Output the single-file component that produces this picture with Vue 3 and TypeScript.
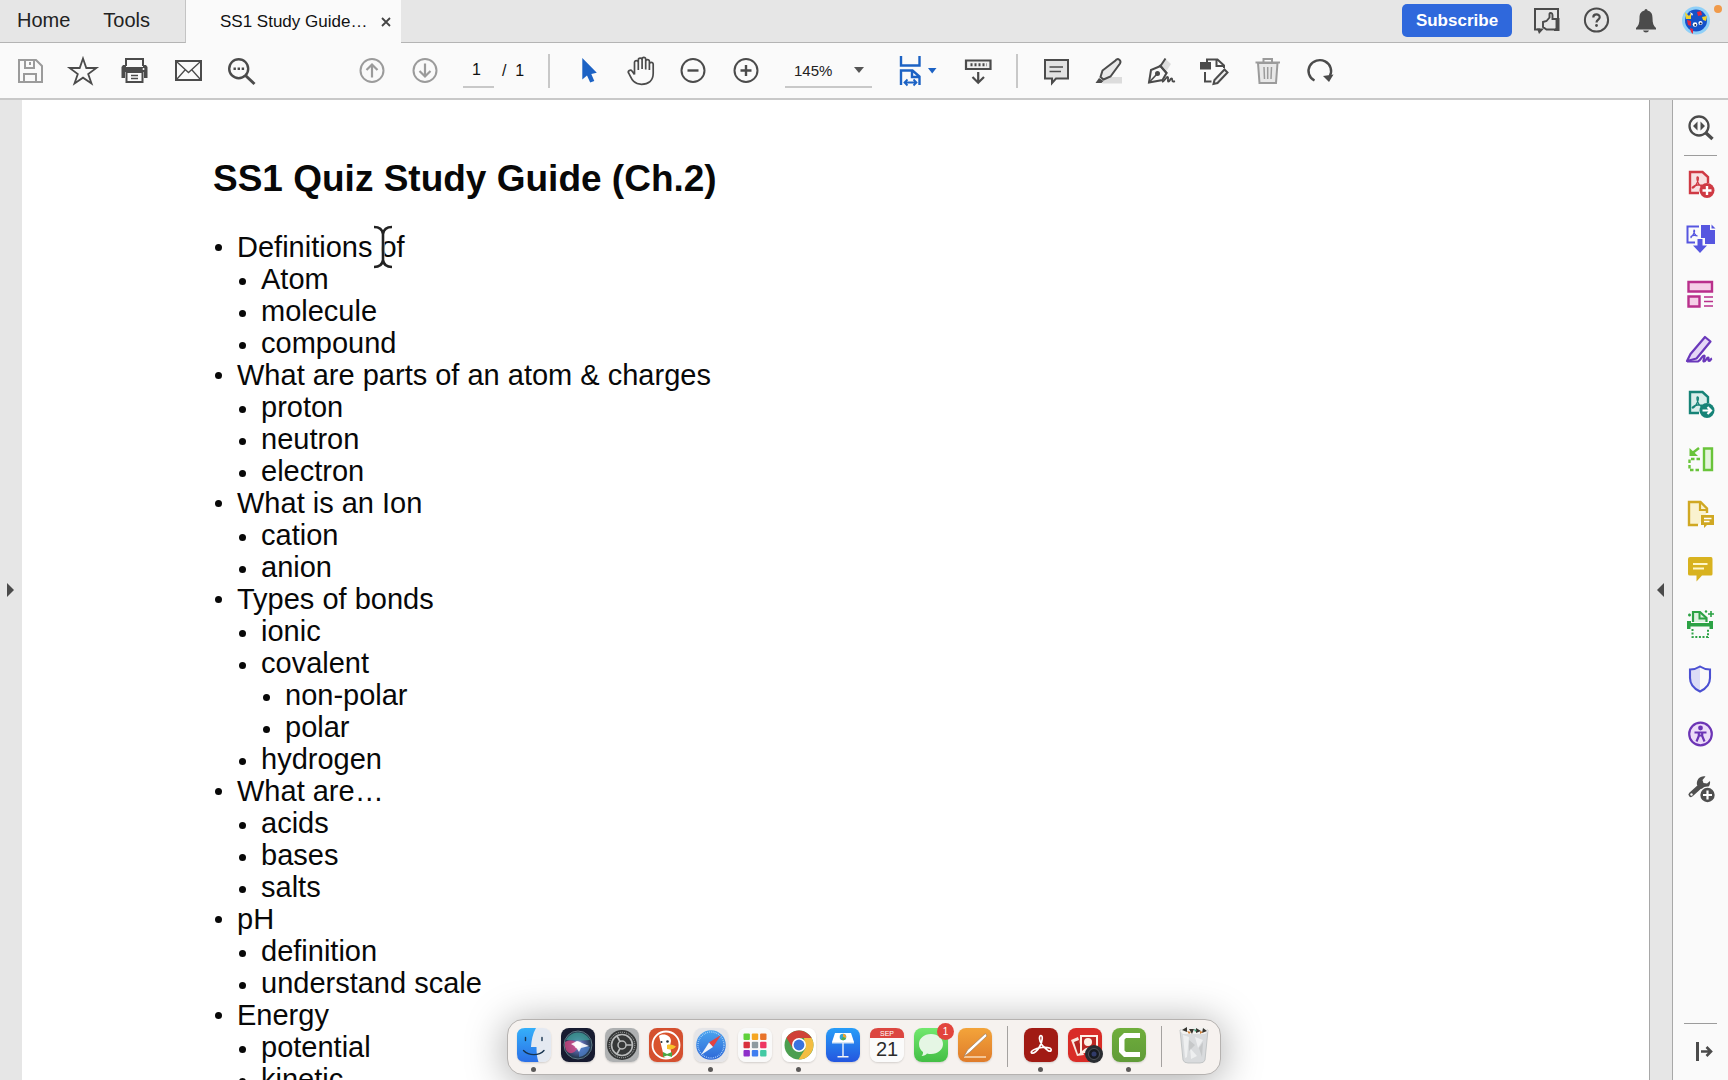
<script setup lang="ts">
import { ref } from 'vue'

interface Tool { name: string; art: string; tone?: string }
interface Entry { text: string; items?: Entry[] }
interface App { name: string; art: string; running?: boolean; badge?: string }

const page = ref('1')
const zoom = ref('145%')

const fileTools: Tool[] = [
  { name: 'Save', tone: 'muted', art: '<path d="M5 6H22L28 12V28H5Z"/><path d="M11 6V14H20V6M16 8V11M10 28V20H22V28"/>' },
  { name: 'Star', art: '<path stroke-width="1.8" d="M16 4.5l3.3 9.5H29.4l-8.2 6.1 3.3 9.4-8.5-5.8-8.5 5.8 3.3-9.4-8.2-6.1h10.1z"/>' },
  { name: 'Print', art: '<path d="M6 12V5H23V12"/><path fill="currentColor" stroke="none" d="M3 11H6V13H23V11H26L27.500 13V24H24V18H5V24H1.500V13Z"/><path fill="#fafafa" d="M6.500 18H22.500V28H6.500Z"/><path stroke-width="1.500" d="M11 21.500H18M11 24.500H18"/><circle cx="23.500" cy="15" r="1" fill="#fff" stroke="none"/>' },
  { name: 'Email', art: '<path d="M3 7H28V26H3Z"/><path stroke-width="1.300" d="M4 8L15.500 18.500 27 8M4 25L12 16M27 25L19 16"/>' },
  { name: 'Find', art: '<circle cx="12.700" cy="14.700" r="9.500" stroke-width="2.400"/><path stroke-width="3" d="M19.500 21.500L28.500 30"/><path fill="currentColor" stroke="none" d="M7.500 13.500h2.400v2.400H7.500zM11.600 13.500H14v2.400h-2.400zM15.700 13.500h2.400v2.400h-2.400z"/>' },
]
const pageTools: Tool[] = [
  { name: 'Previous page', tone: 'muted', art: '<circle cx="16" cy="16.500" r="11.500"/><path stroke-width="2.200" d="M16 23.500V11M10.500 16L16 10.500 21.500 16"/>' },
  { name: 'Next page', tone: 'muted', art: '<circle cx="16" cy="16.500" r="11.500"/><path stroke-width="2.200" d="M16 9.500V22M10.500 17L16 22.500 21.500 17"/>' },
]
const viewTools: Tool[] = [
  { name: 'Select', tone: 'blue', art: '<path fill="currentColor" stroke="none" d="M11.300 4V25.500L16 21.500 19.200 28.500 23.300 27 20.300 20 25.800 18.700Z"/>' },
  { name: 'Pan', art: '<path stroke-width="1.700" d="M10.500 20.500L8 17a2 2 0 0 0-3.400 2.100C7 22.500 8 30.300 17.500 30.300c7 0 11.700-3.500 11.700-11V10.300a1.900 1.900 0 0 0-3.800 0V16M10.500 20.500V8.500a1.900 1.900 0 0 1 3.800 0V16M14.300 16V6a1.900 1.900 0 0 1 3.800 0V15M18.100 15V5.200a1.800 1.800 0 0 1 3.600 0V15.500M21.700 15V7.500a1.800 1.800 0 0 1 3.700 0V16"/>' },
  { name: 'Zoom out', art: '<circle cx="16" cy="16.500" r="11.500"/><path d="M10.500 16.500H21.500" stroke-width="2.400"/>' },
  { name: 'Zoom in', art: '<circle cx="16" cy="16.500" r="11.500"/><path d="M10.500 16.500H21.500M16 11V22" stroke-width="2.400"/>' },
]
const markTools: Tool[] = [
  { name: 'Comment', art: '<path fill="#e2e2e2" d="M5 6H28V24.500H16L12 29V24.500H5Z"/><path stroke-width="1.500" d="M9.500 13H23M9.500 17.500H21"/>' },
  { name: 'Highlight', art: '<path fill="#dcdcdc" stroke="none" d="M13 23H29V29.500H9Z"/><path fill="#e8e8e8" d="M22.500 6.500c1-1.500 2.500-1.800 3.800-.8s1.500 2.300.7 3.800L17.500 22.500 10.500 25.500 7.500 23 9.500 16.500Z"/><path fill="currentColor" stroke="none" d="M6 24L10.500 27 8.500 29H2.500Z"/>' },
  { name: 'Sign', art: '<path stroke="none" fill="#dedede" d="M19.500 5L25 10 20.500 17 15 12Z"/><path d="M3 28.500L5 16 14.500 12 20.500 19 16.500 26Z"/><path stroke-width="1.600" d="M3 28.500L11 20"/><path d="M13.500 11L21 19.500M14.500 12L19.500 4.500"/><circle cx="11.500" cy="19.500" r="1.500" fill="currentColor"/><path stroke-width="1.800" d="M16 28c3-1 4-5 5.500-5s-.5 4.500 1 4.500 1.500-3 3-3 0 3 1.500 3 1 0 2-.3"/>' },
  { name: 'Edit PDF', art: '<path fill="currentColor" stroke="none" d="M1 8H12V15.500H1Z"/><path d="M8 8V5.500H18.500L25 11.500V14M17.500 6V12H24M6 18V27.500H12.500"/><path fill="#eee" d="M25.500 15.500L28.500 18.500 18.500 29 14.500 30 15.500 26Z"/>' },
  { name: 'Delete', tone: 'muted', art: '<path fill="#e8e8e8" d="M6 9H25.500L24 29H7.500Z"/><path d="M3.500 8.500H28M11.500 8V5H20V8" /><path stroke-width="1.500" d="M12 13L12.500 25M15.700 13V25M19.500 13L19 25"/>' },
  { name: 'Rotate', art: '<path stroke-width="2.400" d="M9.500 26.500A11.300 10.800 0 1 1 24.800 22"/><path fill="currentColor" stroke="none" d="M18 22L28.500 20.500 24 28Z"/>' },
]

const acrobatMark = '<path stroke-width="1.300" d="M13.500 9C15 9 14.500 12 13 15S9.500 20.500 8.500 20 10 17.500 13.500 17 19.500 17.300 19 18.500 16 18 14.500 15.500 12.500 9 13.500 9Z"/>'
const sideTools: Tool[] = [
  { name: 'Create PDF', tone: '#cf3a44', art: `<path fill="#f8e1e2" stroke-width="2.400" d="M24 15V9L18.500 4H6V25H15"/>${acrobatMark}<circle cx="23" cy="22.500" r="7.500" fill="currentColor" stroke="none"/><path stroke="#fff" stroke-width="2.400" d="M18.500 22.500H27.500M23 18V27"/>` },
  { name: 'Export PDF', tone: '#5656e0', art: '<path fill="currentColor" stroke="none" d="M17 2H26V7H31V21H21V15H17Z"/><path fill="currentColor" stroke="none" d="M27.500 1.500L31.500 5.500H27.500Z"/><path d="M15 3.500H3.500V19.500H11"/><path stroke-width="1.200" d="M10 7c1.500 0 0 4-3 7.500-1-1.500 3-3 6.500-1.500C11 13 9 8.500 10 7Z"/><path fill="currentColor" stroke="none" d="M13.500 16H18.500V22.500H23L16 30 9 22.500H13.500Z"/>' },
  { name: 'Organize pages', tone: '#b9308c', art: '<path fill="#f5cfe7" stroke-width="2.400" d="M4.500 4H28V13.500H4.500ZM4.500 18.500H15.500V28.500H4.500Z"/><path stroke-width="1.700" d="M20 19H29M20 23.500H29M20 28H29"/>' },
  { name: 'Fill and sign', tone: '#6a38bb', art: '<path fill="#e5d7f6" stroke-width="2.200" stroke-linejoin="round" d="M21 4L26.500 8.500 12.500 25.500 3 28 6.500 21Z"/><path stroke-width="2.200" d="M3 28.500H14c3-1 4-6 6-6s-2 6 0 6 2.500-4 4-4-.5 3.500 1 3.500 1.500-2 3-2.500"/>' },
  { name: 'Send for review', tone: '#168377', art: `<path fill="#d9eeeb" stroke-width="2.400" d="M24 15V9L18.500 4H6V25H15"/>${acrobatMark}<circle cx="23" cy="22.500" r="7.500" fill="currentColor" stroke="none"/><path stroke="#fff" stroke-width="2.200" d="M18.500 22.500H27M23.500 19L27 22.500 23.500 26"/>` },
  { name: 'Compare files', tone: '#69c43a', art: '<path fill="#e5f4dc" stroke-width="2.400" d="M20 5.500H28V27H20Z"/><path stroke-width="2.400" stroke-dasharray="3.500 2" d="M16 16H5.500V27H17"/><path stroke-width="2.400" d="M15 5L8.500 10"/><path fill="currentColor" stroke="none" d="M5.500 5V13H14Z"/>' },
  { name: 'Combine files', tone: '#d0a823', art: '<path fill="#faf2cf" stroke-width="2.400" d="M14 27H5V4H16.500L23 10.500V15"/><path stroke-width="2.200" d="M16 5V12H23"/><path fill="currentColor" stroke="none" d="M17 17H30V27H23L20 30V27H17Z"/><path stroke="#fff" stroke-width="1.300" d="M20 20.500H27.500M20 23.500H25.500"/>' },
  { name: 'Comment', tone: '#d8b21f', art: '<path fill="currentColor" stroke="none" d="M6 4H27Q28.500 4 28.500 6V21Q28.500 22.500 27 22.500H18L12.500 28.500V22.500H6Q4 22.500 4 21V6Q4 4 6 4Z"/><path stroke="#fff7c8" stroke-width="1.800" d="M9 11H23.500M9 15.500H20"/>' },
  { name: 'Scan', tone: '#2ca245', art: '<path fill="#dcf1df" stroke-width="2.200" d="M9 14V4H16L22.500 10V14"/><path stroke-width="2" d="M15.500 4V10.500H22"/><path fill="currentColor" stroke="none" d="M3 13H7V15H25V13H29V21H25.500V18.500H6.500V21H3Z"/><path stroke-width="2" stroke-dasharray="2 1.600" d="M8.500 21V29H24V21"/><path stroke-width="1.600" d="M27 3V9M24 6H30M5.500 5.500V8.500M4 7H7"/><circle cx="22" cy="3.500" r="1.200" fill="currentColor" stroke="none"/>' },
  { name: 'Protect', tone: '#4b50d2', art: '<path fill="#dcdcf6" stroke="none" d="M16 4V28C9 24 6.500 20 6.500 15V6.500C10 6.500 13 5.500 16 4Z"/><path stroke-width="2.100" d="M16 3.500C19 5.500 22 6.500 26 6.500V15C26 21 22.500 25.500 16 28.500 9.500 25.500 6 21 6 15V6.500C10 6.500 13 5.500 16 3.500Z"/>' },
  { name: 'Accessibility', tone: '#6c34b5', art: '<circle cx="16.500" cy="16" r="11.300" fill="#ecdcf8" stroke-width="2.200"/><circle cx="16.500" cy="10" r="2.400" fill="currentColor" stroke="none"/><path stroke-width="2.200" d="M10.500 14.500H22.500M14.800 14V18L12.500 23.500M18.200 14V18L20.500 23.500M15 17.500H18"/>' },
  { name: 'More tools', tone: '#4f4f4f', art: '<path stroke-width="5" stroke-linecap="round" d="M7 21.500L17 12.500"/><path fill="currentColor" stroke="none" d="M13 12C12 7 16 2.500 21.500 3.500L18.500 7 19.500 10 23 10.500 26 8C27 13 22 18 16.500 15.500Z"/><circle cx="7.500" cy="21.500" r="1.200" fill="#fafafa" stroke="none"/><circle cx="23.500" cy="22" r="8.500" fill="#fafafa" stroke="none"/><circle cx="23.500" cy="22" r="7.200" fill="currentColor" stroke="none"/><path stroke="#fff" stroke-width="2.200" d="M19 22H28M23.500 17.500V26.500"/>' },
]

const accountTools: Tool[] = [
  { name: 'Feedback', art: '<path d="M10 25.500H5V5H28V14"/><path fill="currentColor" stroke="none" d="M7 24.500H14L9 30ZM24 14H29.500V27H24Z"/><path fill="#e6e6e6" stroke-width="1.900" d="M13 18L16.500 17 19.500 13.500V10C19.500 8.500 22.500 8.500 22.500 11V15H26.500V24Q26 25.500 24 25.500H16.500L13 23Z"/>' },
  { name: 'Help', art: '<circle cx="16.500" cy="16" r="11.600"/><path stroke-width="2.200" d="M13.300 13.500C13.300 9.500 19.700 9.500 19.700 13.200 19.700 15.500 16.500 15.700 16.500 18.500"/><circle cx="16.500" cy="21.500" r="1.400" fill="currentColor" stroke="none"/>' },
  { name: 'Notifications', art: '<path fill="currentColor" stroke="none" d="M14.500 6.500Q14.500 5 16 5T17.500 6.500C21.500 7.500 22.500 10.500 22.500 14 22.500 19 23.500 22 26 24V25.500H6V24C8.500 22 9.500 19 9.500 14 9.500 10.500 10.500 7.500 14.500 6.500ZM13 26.500H19Q18.500 28.500 16 28.500T13 26.500Z"/>' },
  { name: 'Account', art: '<g stroke="none"><circle cx="16" cy="16.500" r="14" fill="#8fd0f8"/><circle cx="16" cy="16.500" r="11" fill="#1551c8"/><path fill="#f0d22b" d="M5 8L9 12 11 9 11 15 6 15ZM22 13l5-1-1 5-3-1z"/><path fill="#e2263f" d="M7 16L11 17 11 22 8 21ZM17 8L21 7 22 11 18 12ZM10 24l3 1 0 5-2-2z"/><circle cx="15" cy="20.500" r="2.300" fill="#fff"/><circle cx="20.500" cy="19" r="2.100" fill="#fff"/><circle cx="15.300" cy="21" r="1" fill="#124"/><circle cx="20.700" cy="19.500" r="1" fill="#124"/><path fill="#fff" d="M10 8l3 2-1 2z"/></g>' },
]

const guide: Entry[] = [
  { text: 'Definitions of', items: [{ text: 'Atom' }, { text: 'molecule' }, { text: 'compound' }] },
  { text: 'What are parts of an atom & charges', items: [{ text: 'proton' }, { text: 'neutron' }, { text: 'electron' }] },
  { text: 'What is an Ion', items: [{ text: 'cation' }, { text: 'anion' }] },
  { text: 'Types of bonds', items: [{ text: 'ionic' }, { text: 'covalent', items: [{ text: 'non-polar' }, { text: 'polar' }] }, { text: 'hydrogen' }] },
  { text: 'What are…', items: [{ text: 'acids' }, { text: 'bases' }, { text: 'salts' }] },
  { text: 'pH', items: [{ text: 'definition' }, { text: 'understand scale' }] },
  { text: 'Energy', items: [{ text: 'potential' }, { text: 'kinetic' }] },
]

const tile = (fill: string) => `<rect width="34" height="34" rx="8" fill="${fill}"/>`
const gridColors = ['#5fd13c', '#f5a623', '#e8742a', '#d8303c', '#8d9aa0', '#ee3562', '#8d2fc9', '#3f7df0', '#42c9a4']
const gridArt = gridColors
  .map((c, i) => `<rect x="${5.5 + (i % 3) * 8.300}" y="${5.500 + Math.floor(i / 3) * 8.300}" width="6.400" height="6.400" rx="1" fill="${c}"/>`)
  .join('')

const mainApps: App[] = [
  { name: 'Finder', running: true, art: tile('#e4e9f1') + '<path fill="url(#finder)" d="M8 0H19C15.500 6 14.500 12 14 19H19.500C19.500 25 20 30 21.500 34H8Q0 34 0 26V8Q0 0 8 0Z"/><path fill="none" stroke="#17344f" stroke-width="1.400" stroke-linecap="round" d="M8.500 9.500V12.500M25 9.500V12.500M6.500 22.500C12 28 22 28 27 22.500"/>' },
  { name: 'Siri', art: tile('#171b30') + '<circle cx="17" cy="17" r="14" fill="url(#siri)" stroke="#6d8a94" stroke-width=".8"/><path fill="#3fa79b" opacity=".7" d="M5 12C10 2 24 2 29 12 22 13 13 12 5 12Z"/><path fill="#d8447f" opacity=".75" d="M4 14C10 11 15 13 18 17 15 25 9 28 5 22Q3 18 4 14Z"/><path fill="#4d83cf" opacity=".7" d="M18 17L29 19Q26 28 18 29Z"/><circle cx="17" cy="17" r="3.500" fill="#fff" opacity=".8"/><path fill="#fff" opacity=".9" d="M10 16L16 13 21 15 28 18 20 20 18 24 15 19Z"/>' },
  { name: 'System Preferences', art: tile('#aeb0b1') + '<circle cx="17" cy="17" r="15" fill="#363838"/><g fill="none" stroke="#b9bbbb"><circle cx="17" cy="17" r="12.800" stroke-width="1" stroke-dasharray="1 1"/><circle cx="17" cy="17" r="10.500" stroke-width="1.600"/><circle cx="17" cy="17" r="4" stroke-width="1.500"/><path stroke-width="1.600" d="M21 17H27M15 13.500L12 8M15 20.500L12 26"/></g>' },
  { name: 'DuckDuckGo', art: tile('#d4502f') + '<circle cx="17" cy="17" r="13.500" fill="#d9532d" stroke="#fff" stroke-width="1.800"/><path fill="#fff" d="M10 8C14 5 22 7 22 13L21 18 23 29Q18 31 15 29Z"/><circle cx="18.500" cy="13.500" r="1.300" fill="#26323a"/><circle cx="12.500" cy="14" r="1" fill="#26323a"/><path fill="#f8c32c" d="M18 17C21 16 24 17 27 18.500 25 21 22 22 18 21Z"/><path fill="#4ca544" d="M14 24L18 26 23 24V29L18 27.500 14 29Z"/>' },
  { name: 'Safari', running: true, art: tile('#e5e5e8') + '<circle cx="17" cy="17" r="14.800" fill="url(#safari)"/><circle cx="17" cy="17" r="13" fill="none" stroke="#b9dcff" stroke-width="1.400" stroke-dasharray=".7 1.200"/><path fill="#e34240" d="M27 7L15 14.500 19 19Z"/><path fill="#f1f4fa" d="M7 27L15 14.500 19 19Z"/>' },
  { name: 'Launchpad', art: tile('#f9f9f9') + gridArt },
  { name: 'Chrome', running: true, art: tile('#fff') + '<circle cx="17" cy="17" r="14.500" fill="#4c9f50"/><path fill="#cf4236" d="M4.500 9.700A14.500 14.500 0 0 1 29.600 10H17L11 20.500Z"/><path fill="#f3bd42" d="M29.600 10A14.500 14.500 0 0 1 16.500 31.500L23.500 20.500 22 10Z"/><circle cx="17" cy="17" r="7" fill="#fff"/><circle cx="17" cy="17" r="5.400" fill="#3973df"/>' },
  { name: 'Keynote', art: tile('url(#keynote)') + '<path fill="#fff" d="M9 5H25L28 14H6Z"/><path fill="#d7e6f4" d="M6 14H28V15.500H6Z"/><path stroke="#e7eef8" stroke-width="1.500" d="M17 15V29"/><path fill="#f3f3f3" d="M11.500 28H22.500V29.500H11.500Z"/><circle cx="17" cy="9" r="3.300" fill="#37a5d5"/><path fill="#f1a52d" d="M17 9V5.700A3.300 3.300 0 0 1 20 10Z"/><path fill="#58ae49" d="M17 9L20 10.500A3.300 3.300 0 0 1 15 11.500Z"/>' },
  { name: 'Calendar', art: tile('#fbfbfb') + '<path fill="#dc4640" d="M0 10V8Q0 0 8 0H26Q34 0 34 8V10Z"/><text x="17" y="8" text-anchor="middle" font-size="7" fill="#fff">SEP</text><text x="17" y="28" text-anchor="middle" font-size="20" fill="#2b2b2b">21</text>' },
  { name: 'Messages', badge: '1', art: tile('url(#messages)') + '<path fill="#e5f6e4" d="M17 6C24 6 29 10.500 29 16S24 26 17 26Q15 26 13 25.500C12 27 10 28 7.500 28 9 26.500 9 25.500 9 24 6.500 22 5 19.500 5 16 5 10.500 10 6 17 6Z"/>' },
  { name: 'Pages', art: tile('url(#pages)') + '<path stroke="#fff1dc" stroke-width="1.200" d="M6 29H28"/><path fill="#fff" stroke="#9b8066" stroke-width=".7" d="M27.500 5.500L29 8 12 24 6 28.500 9.500 22Z"/>' },
]
const openApps: App[] = [
  { name: 'Acrobat', running: true, art: tile('#a11b14') + '<path fill="none" stroke="#fff" stroke-width="1.700" d="M17 7.500C19 7.500 18.500 13 16 18S9.500 26 7.500 25C6 23.500 11 20 18 19.500S28 20.500 27 22.500 22.500 22 18.500 17.500 15 7.500 17 7.500Z"/>' },
  { name: 'Photo Booth', art: tile('#d92c27') + '<path fill="#f8e9df" d="M3 12L10 9 16 27 9 28Z"/><path fill="#b32622" d="M6 14L11 12 14 24 10 26Z"/><path fill="#fff1e6" d="M12 7H30V25H12Z"/><path fill="#bd2824" d="M14 9H28V23H14Z"/><circle cx="20" cy="14" r="4" fill="#fff0e5"/><path fill="#fff0e5" d="M14 23Q20 16 27 23Z"/><circle cx="26" cy="26" r="9" fill="#292c31"/><circle cx="26" cy="26" r="5.500" fill="#171a20" stroke="#50545a"/><circle cx="26" cy="26" r="2.500" fill="#313b69"/>' },
  { name: 'Camtasia', running: true, art: tile('url(#camtasia)') + '<path fill="#fff" d="M12 5H28V10H14L12.500 11.500V22.500L14 24H28V29H12L7 24V10Z"/>' },
]
</script>

<template>
  <div class="window">
    <header class="tabs">
      <nav class="links">
        <a href="#home">Home</a>
        <a href="#tools">Tools</a>
      </nav>
      <div class="tab">
        <span>SS1 Study Guide…</span>
        <button class="close" aria-label="Close tab">
          <svg width="10" height="10" viewBox="0 0 10 10"><path d="M1 1L9 9M9 1L1 9" stroke="#444" stroke-width="1.8" /></svg>
        </button>
      </div>
      <div class="account">
        <button class="subscribe">Subscribe</button>
        <button v-for="t in accountTools" :key="t.name" class="tool" :aria-label="t.name">
          <svg viewBox="0 0 32 34" v-html="t.art" />
        </button>
        <i class="alert"></i>
      </div>
    </header>

    <div class="toolbar">
      <div class="group file">
        <button v-for="t in fileTools" :key="t.name" class="tool" :class="t.tone" :aria-label="t.name">
          <svg viewBox="0 0 32 34" v-html="t.art" />
        </button>
      </div>
      <div class="group paging">
        <button v-for="t in pageTools" :key="t.name" class="tool" :class="t.tone" :aria-label="t.name">
          <svg viewBox="0 0 32 34" v-html="t.art" />
        </button>
      </div>
      <label class="count"><input v-model="page" aria-label="Page number" /><span>/ &nbsp;1</span></label>
      <i class="rule"></i>
      <div class="group view">
        <button v-for="t in viewTools" :key="t.name" class="tool" :class="t.tone" :aria-label="t.name">
          <svg viewBox="0 0 32 34" v-html="t.art" />
        </button>
      </div>
      <div class="zoom">
        <select v-model="zoom" aria-label="Zoom level">
          <option>100%</option>
          <option>145%</option>
          <option>200%</option>
        </select>
        <svg width="10" height="6" viewBox="0 0 10 6"><path d="M0 0H10L5 6Z" fill="#555" /></svg>
      </div>
      <button class="tool wide blue" aria-label="Fit width">
        <svg viewBox="0 0 44 34">
          <path stroke-width="2.4" d="M6 2V11.500H24.500V2M6 31V16.500H17.500L24.500 22.500V31M17 16.500V23H24.500" />
          <path stroke-width="1.8" d="M10 28.500H21M12.500 25.500L9.500 28.500 12.500 31.500M18.500 25.500L21.500 28.500 18.500 31.500" />
          <path fill="currentColor" stroke="none" d="M33 14H41.500L37.200 19.500Z" />
        </svg>
      </button>
      <button class="tool keys" aria-label="Read mode">
        <svg viewBox="0 0 32 34">
          <path fill="#eee" stroke-width="2.2" d="M4 6.500H28.500V15H4Z" />
          <path stroke-width="3" stroke-dasharray="2 2" d="M8.500 10.800H25" />
          <path stroke-width="2.200" d="M16.200 18V28M10.500 23L16.200 28.700 22 23" />
        </svg>
      </button>
      <i class="rule"></i>
      <div class="group mark">
        <button v-for="t in markTools" :key="t.name" class="tool" :class="t.tone" :aria-label="t.name">
          <svg viewBox="0 0 32 34" v-html="t.art" />
        </button>
      </div>
    </div>

    <div class="body">
      <button class="gutter left" aria-label="Show navigation pane">
        <svg width="9" height="14" viewBox="0 0 9 14"><path d="M1 0L8 7 1 14Z" fill="#4b4b4b" /></svg>
      </button>
      <main class="page">
        <h1>SS1 Quiz Study Guide (Ch.2)</h1>
        <ul class="list">
          <li v-for="a in guide" :key="a.text">{{ a.text }}
            <ul>
              <li v-for="b in a.items" :key="b.text">{{ b.text }}
                <ul v-if="b.items">
                  <li v-for="c in b.items" :key="c.text">{{ c.text }}</li>
                </ul>
              </li>
            </ul>
          </li>
        </ul>
        <svg class="caret" width="22" height="44" viewBox="0 0 22 44">
          <path fill="none" stroke="#fff" stroke-width="4" d="M2 2Q10 2 11 9 12 2 20 2M11 9V35M2 42Q10 42 11 35 12 42 20 42" opacity=".6" />
          <path fill="none" stroke="#222" stroke-width="2.6" d="M2 2Q10 2 11 9 12 2 20 2M11 9V35M2 42Q10 42 11 35 12 42 20 42" />
        </svg>
      </main>
      <button class="gutter right" aria-label="Hide tools pane">
        <svg width="9" height="14" viewBox="0 0 9 14"><path d="M8 0L1 7 8 14Z" fill="#4b4b4b" /></svg>
      </button>
      <aside class="side">
        <button class="tool" aria-label="Search tools">
          <svg viewBox="0 0 32 32">
            <circle cx="15" cy="14" r="9.500" stroke-width="2.300" />
            <path stroke-width="3.400" d="M22 21L28.500 27" />
            <path fill="currentColor" stroke="none" d="M13.500 9.500V18.500L9 14ZM16.500 9.500V18.500L21 14Z" />
          </svg>
        </button>
        <hr />
        <div class="stack">
          <button v-for="t in sideTools" :key="t.name" class="tool" :style="{ color: t.tone }" :aria-label="t.name">
            <svg viewBox="0 0 32 32" v-html="t.art" />
          </button>
        </div>
        <hr class="last" />
        <button class="tool" aria-label="Collapse pane">
          <svg viewBox="0 0 32 32"><path stroke-width="3" d="M13.500 6V25" /><path stroke-width="2.600" d="M17 15.500H26M22.500 11L27 15.500 22.500 20" /></svg>
        </button>
      </aside>
    </div>

    <nav class="dock" aria-label="Dock">
      <button v-for="a in mainApps" :key="a.name" class="app" :aria-label="a.name">
        <svg viewBox="0 0 34 34" v-html="a.art" />
        <b v-if="a.badge">{{ a.badge }}</b>
        <i v-if="a.running"></i>
      </button>
      <span class="split"></span>
      <button v-for="a in openApps" :key="a.name" class="app" :aria-label="a.name">
        <svg viewBox="0 0 34 34" v-html="a.art" />
        <i v-if="a.running"></i>
      </button>
      <span class="split"></span>
      <button class="app" aria-label="Trash">
        <svg viewBox="0 0 34 34">
          <path fill="#d9dbdd" stroke="#b9bcbe" stroke-width=".8" d="M3 2H31L28 32Q27 35 23 35H11Q7 35 6 32Z" />
          <path fill="#f3f4f5" opacity=".8" d="M6 7L12 9 10 29 8 30ZM18 9L26 12 21 20ZM13 20L20 28 14 31Z" />
          <path fill="#b9bbbd" opacity=".6" d="M12 12L18 17 12 23ZM22 20L26 14 25 29Z" />
          <path fill="#f1f1ef" d="M3 3L8-2 13 0 18-2 23 0 28-1 31 3 28 6H6Z" />
          <path fill="#37342e" d="M5 2L10-1 10 4ZM12 1L17 1 15 6ZM19 0L24 3 19 5ZM26 0L30 3 25 5Z" />
          <path fill="#d07e36" d="M10 3L14 4 12 6ZM23 3L26 4 23 6Z" /><path fill="#3c9b75" d="M17 1L20 2 18 4Z" />
        </svg>
      </button>
    </nav>

    <svg class="paints" width="0" height="0" aria-hidden="true">
      <defs>
        <linearGradient id="finder" x2="0" y2="1"><stop stop-color="#35b0fa" /><stop offset="1" stop-color="#2b6fe6" /></linearGradient>
        <radialGradient id="siri"><stop stop-color="#d2e5ff" /><stop offset=".4" stop-color="#5a67a8" /><stop offset="1" stop-color="#1c3243" /></radialGradient>
        <linearGradient id="safari" x2="0" y2="1"><stop stop-color="#4aa4ee" /><stop offset="1" stop-color="#2e68d8" /></linearGradient>
        <linearGradient id="keynote" x2="0" y2="1"><stop stop-color="#279df8" /><stop offset="1" stop-color="#2456df" /></linearGradient>
        <linearGradient id="messages" x2="0" y2="1"><stop stop-color="#72e86e" /><stop offset="1" stop-color="#43be45" /></linearGradient>
        <linearGradient id="pages" x2="0" y2="1"><stop stop-color="#f3a43a" /><stop offset="1" stop-color="#df7c2b" /></linearGradient>
        <linearGradient id="camtasia" x2="0" y2="1"><stop stop-color="#6fae3b" /><stop offset="1" stop-color="#609b38" /></linearGradient>
      </defs>
    </svg>
  </div>
</template>

<style>
body { background: #fff; }
</style>

<style scoped>
.window {
  position: relative;
  display: flex;
  flex-direction: column;
  height: 100vh;
  overflow: hidden;
  color: #222;
  font-family: "Liberation Sans", Arial, sans-serif;
}
.window * { box-sizing: border-box; }
button {
  padding: 0;
  border: 0;
  background: none;
  color: inherit;
  font: inherit;
}
svg { display: block; flex: none; overflow: visible; }

.tabs {
  display: flex;
  flex: none;
  height: 43px;
  background: #e6e6e6;
}
.links {
  display: flex;
  gap: 33px;
  width: 186px;
  padding-left: 17px;
  border-right: 1px solid #c4c4c4;
  border-bottom: 1px solid #b4b4b4;
  font-size: 20px;
  line-height: 40px;
}
.links a { color: #222; text-decoration: none; }
.tab {
  display: flex;
  align-items: center;
  justify-content: space-between;
  width: 215px;
  padding: 1px 10px 0 34px;
  background: #fafafa;
  font-size: 17px;
  color: #111;
}
.account {
  position: relative;
  display: flex;
  flex: 1;
  align-items: flex-start;
  justify-content: flex-end;
  gap: 18px;
  padding: 4px 16px 0 0;
  border-bottom: 1px solid #b4b4b4;
}
.subscribe {
  width: 110px;
  height: 33px;
  border-radius: 5px;
  background: #2f68dc;
  color: #fff;
  font-size: 17px;
  font-weight: 700;
}
.alert {
  position: absolute;
  top: 5px;
  right: 6px;
  width: 8px;
  height: 8px;
  border-radius: 50%;
  background: #f09a4a;
}

.tool { flex: none; width: 32px; color: #4b4b4b; }
.tool svg { width: 100%; fill: none; stroke: currentColor; stroke-width: 2; }
.tool.muted { color: #9b9b9b; }
.tool.blue { color: #1c62c4; }
.tool.wide { width: 44px; margin-left: 23px; }
.tool.keys { margin: 0 22px 0 23px; }

.toolbar {
  display: flex;
  flex: none;
  align-items: flex-start;
  height: 57px;
  padding: 11px 14px 0;
  border-bottom: 2px solid #c8c8c8;
  background: #fafafa;
}
.group { display: flex; gap: 21px; }
.paging { margin-left: 98px; }
.view { margin-left: 21px; }
.mark { margin-left: 22px; }
.rule { width: 2px; height: 34px; background: #c8c8c8; }
.count {
  display: flex;
  gap: 8px;
  width: 85px;
  margin-left: 22px;
  font-size: 16px;
  line-height: 34px;
  color: #111;
}
.count input {
  width: 31px;
  height: 34px;
  padding: 0 4px 0 0;
  border: 0;
  border-bottom: 2px solid #c8c8c8;
  background: none;
  font: inherit;
  text-align: center;
  color: inherit;
}
.zoom {
  display: flex;
  align-items: center;
  width: 87px;
  height: 34px;
  margin-left: 23px;
  border-bottom: 2px solid #c8c8c8;
}
.zoom select {
  flex: 1;
  width: 87px;
  height: 32px;
  padding: 0 0 0 9px;
  border: 0;
  background: none;
  appearance: none;
  font: inherit;
  font-size: 15px;
  color: #222;
}
.zoom svg { margin-right: 8px; pointer-events: none; }

.body { display: flex; flex: 1; min-height: 0; }
.gutter {
  display: flex;
  flex: none;
  align-items: center;
  justify-content: center;
  width: 22px;
  padding-right: 2px;
  background: #e6e6e6;
}
.right {
  width: 24px;
  border: solid #a8a8a8;
  border-width: 0 1px;
}
.page {
  position: relative;
  flex: 1;
  overflow: hidden;
  padding: 59px 40px 0 191px;
  background: #fff;
  color: #080808;
}
h1 {
  margin: 0 0 32px;
  font-size: 37px;
  line-height: 40px;
}
ul { margin: 0; padding: 0; list-style: none; }
.list { font-size: 29px; line-height: 32px; }
li { position: relative; padding-left: 24px; }
li::before {
  content: "";
  position: absolute;
  top: 13px;
  left: 2px;
  width: 7px;
  height: 7px;
  border-radius: 50%;
  background: #080808;
}
li li::before { top: 15px; }
.caret { position: absolute; top: 125px; left: 350px; }

.side {
  display: flex;
  flex: none;
  flex-direction: column;
  align-items: center;
  width: 55px;
  padding: 12px 1px 12px 0;
  background: #fafafa;
}
.side hr {
  width: 33px;
  height: 1px;
  margin: 11px 0 12px;
  border: 0;
  background: #9c9c9c;
}
.side .last { margin: auto 0 12px; }
.stack { display: flex; flex-direction: column; gap: 23px; }

.dock {
  position: absolute;
  bottom: 5px;
  left: 50%;
  display: flex;
  justify-content: space-between;
  width: 714px;
  height: 56px;
  padding: 8px 9px;
  border: 1px solid #b5b2b0;
  border-radius: 16px;
  background: #f6f2ef;
  box-shadow: 0 4px 40px rgba(0, 0, 0, 0.36);
  transform: translateX(-50%);
}
.app { position: relative; width: 34px; height: 34px; border-radius: 8px; box-shadow: 0 1px 2px rgba(0, 0, 0, 0.15); }
.app:last-child { box-shadow: none; }
.app svg { width: 34px; height: 34px; }
.app i {
  position: absolute;
  top: 39px;
  left: 14px;
  width: 5px;
  height: 5px;
  border-radius: 50%;
  background: #5c5a59;
}
.app b {
  position: absolute;
  top: -5px;
  right: -6px;
  width: 17px;
  height: 17px;
  border-radius: 50%;
  background: #e2443c;
  color: #fff;
  font-size: 10px;
  font-weight: 400;
  line-height: 17px;
}
.split { width: 1px; height: 41px; margin: -2px 5px 0; background: #a5a2a0; }
.paints { position: absolute; }
</style>
